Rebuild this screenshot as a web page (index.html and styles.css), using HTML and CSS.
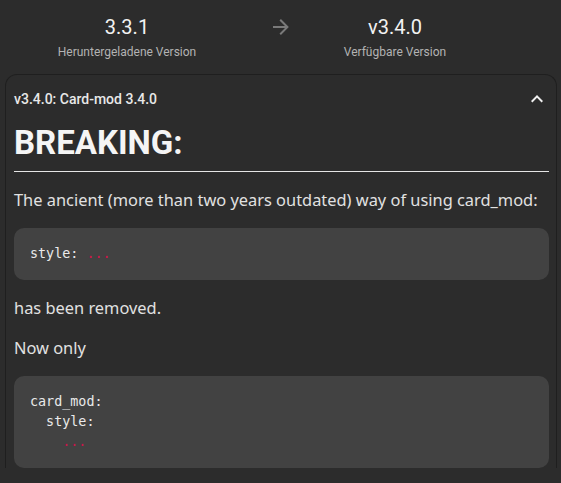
FILE: index.html
```html
<!DOCTYPE html>
<html>
<head>
<meta charset="utf-8">
<link rel="stylesheet" href="styles.css">
</head>
<body>
<div class="versions">
  <div class="ver ver-left">
    <div class="num">3.3.1</div>
    <div class="lbl">Heruntergeladene Version</div>
  </div>
  <div class="arrow">
    <svg viewBox="0 0 24 24" width="24" height="24"><path d="M4,11V13H16L10.5,18.5L11.92,19.92L19.84,12L11.92,4.08L10.5,5.5L16,11H4Z" fill="#7a7a7a"/></svg>
  </div>
  <div class="ver ver-right">
    <div class="num">v3.4.0</div>
    <div class="lbl">Verfügbare Version</div>
  </div>
</div>
<div class="card">
  <div class="card-head">
    <span class="title">v3.4.0: Card-mod 3.4.0</span>
    <svg class="chev" viewBox="0 0 24 24" width="24" height="24"><path d="M7.41,15.41L12,10.83L16.59,15.41L18,14L12,8L6,14L7.41,15.41Z" fill="#f0f0f0"/></svg>
  </div>
  <div class="md">
    <h1>BREAKING:</h1>
    <p>The ancient (more than two years outdated) way of using card_mod:</p>
    <pre><code>style: <span class="red">...</span></code></pre>
    <p>has been removed.</p>
    <p>Now only</p>
    <pre><code>card_mod:
  style:
    <span class="red">...</span></code></pre>
  </div>
</div>
</body>
</html>
```

FILE: styles.css
```css
html, body {
  margin: 0;
  padding: 0;
  background: #2c2c2c;
  color: #e1e1e1;
  font-family: Roboto, "Liberation Sans", sans-serif;
  overflow: hidden;
}
.versions {
  display: grid;
  grid-template-columns: 254px 54px 174px;
  padding-top: 15px;
  height: 59px;
}
.ver {
  display: flex;
  flex-direction: column;
  align-items: center;
}
.num {
  font-size: 20px;
  line-height: 24px;
  font-weight: 400;
  color: #f2f2f2;
}
.lbl {
  font-size: 12px;
  line-height: 16px;
  margin-top: 5px;
  color: #b3b3b3;
}
.arrow {
  display: flex;
  justify-content: center;
  padding-top: 0;
}
.card {
  margin: 0 4px 0 5px;
  border: 1px solid #1f1f1f;
  border-bottom: none;
  border-radius: 12px 12px 0 0;
  padding: 0 7px 0 8px;
}
.card-head {
  height: 48px;
  display: flex;
  align-items: center;
  justify-content: space-between;
}
.title {
  font-size: 14px;
  font-weight: 500;
  color: #e8e8e8;
}
.chev { display: block; }
.md h1 {
  margin: 0;
  font-size: 33px;
  line-height: 40px;
  font-weight: 700;
  color: #f5f5f5;
  padding-bottom: 8px;
  border-bottom: 1px solid #e6e6e6;
}
.md p {
  margin: 16px 0;
  font-family: "Noto Sans", sans-serif;
  font-size: 16.4px;
  line-height: 24px;
}
.md pre {
  margin: 16px 0;
  background: #424242;
  border-radius: 10px;
  padding: 16px;
  font-family: "DejaVu Sans Mono", monospace;
  font-size: 13.4px;
  line-height: 20px;
  color: #eaeaea;
}
.red { color: #d0144a; }
```
